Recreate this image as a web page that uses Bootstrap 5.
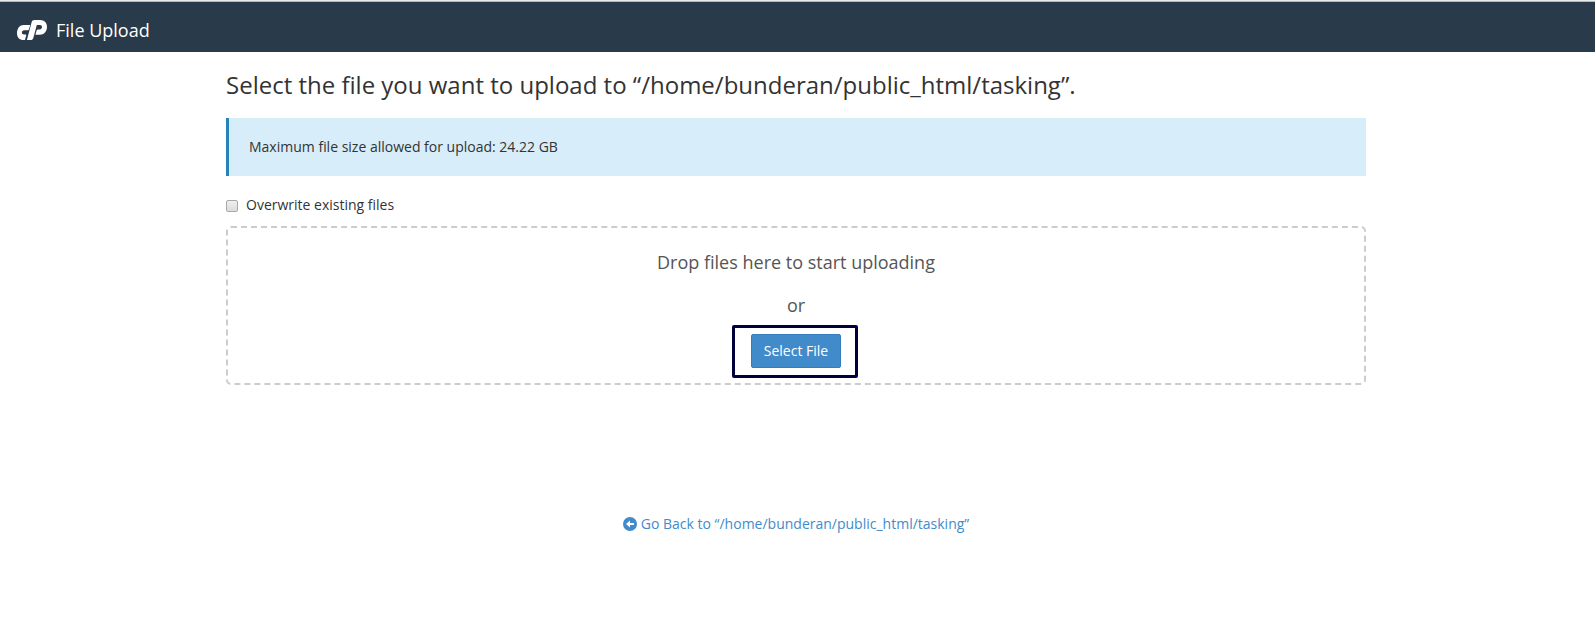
<!DOCTYPE html>
<html lang="en">
<head>
<meta charset="utf-8">
<meta name="viewport" content="width=device-width, initial-scale=1">
<title>File Upload</title>
<link href="https://cdn.jsdelivr.net/npm/bootstrap@5.3.0/dist/css/bootstrap.min.css" rel="stylesheet">
<style>
  body { font-family: "Open Sans", "Noto Sans", sans-serif; font-size: 14px; line-height: 20px; color: #333; background: #fff; }
  .topbar { height: 52px; background: #293a4a; border-top: 1px solid #ebebeb; box-shadow: inset 0 1px #b4b8bc; padding: 7px 17px 0; gap: 9px; font-size: 18px; line-height: 26px; }
  .page-body { padding-right: 3px; }
  .upload-wrap { max-width: 1170px; padding: 0 15px; }
  .page-title { font-size: 24px; line-height: 26px; margin: 20px 0; font-weight: 400; }
  .size-note { background: #d7edf9; border: 0; border-left: 3px solid #2784ba; border-radius: 0; padding: 19px 20px; margin-bottom: 19px; color: #333; }
  .overwrite { gap: 8px; padding-bottom: 11px; }
  .overwrite input { appearance: none; width: 12px; height: 12px; margin: 2px 0 0; border: 1px solid #a9a9a9; border-radius: 2px; background: linear-gradient(#eee, #dcdcdc); }
  .overwrite input:checked { background: #428bca; }
  .drop-zone { border: 2px dashed #ccc; border-radius: 5px; padding: 21px 15px 15px; color: #555; font-size: 18px; line-height: 26px; }
  .drop-zone p { margin-bottom: 17px; }
  .drop-zone p + p { margin-bottom: 16px; }
  .btn-select { --bs-btn-color: #fff; --bs-btn-bg: #428bca; --bs-btn-border-color: #357ebd; --bs-btn-hover-color: #fff; --bs-btn-hover-bg: #3276b1; --bs-btn-font-size: 14px; --bs-btn-line-height: 20px; --bs-btn-padding-x: 12px; --bs-btn-padding-y: 6px; --bs-btn-border-radius: 2px; display: block; }
  .callout-frame { inset: -9px -17px -10px -19px; border: 3px solid #00003f; border-radius: 2px; pointer-events: none; }
  .back-row { margin-top: 129px; }
  .back-link { color: #428bca; gap: 4px; }
  .back-link svg { margin-bottom: 1px; }
</style>
</head>
<body>
<header class="topbar d-flex align-items-center text-white">
  <svg width="30" height="20" viewBox="0 0 30 20" fill="#fff" aria-hidden="true">
    <path d="M6.700 5H13.200l-1.200 4.300c-.2.700-.7 1-1.300 1H7.200c-1.400 0-2.300.9-2.300 2.300 0 1.200.8 2 2.100 2h1.600c.5 0 .8.400.6.900L7.900 20H6.500C2.500 20 0 17.200 0 13.200 0 8.400 2.800 5 6.700 5Z"/>
    <path d="M9.900 20 14.600 2.300C15 .8 16 0 17.500 0h5.700C27.200 0 30 2.800 30 6.700c0 4.600-2.800 8-7.200 8h-4.400l1.200-4.300c.2-.7.700-1 1.300-1h1.500c1.600 0 2.600-.9 2.600-2.400 0-1.200-.9-1.900-2.200-1.900h-3l-3.500 12.800C15.900 19.300 15 20 13.600 20Z"/>
  </svg>
  <span>File Upload</span>
</header>

<main class="page-body">
  <div class="upload-wrap container-fluid mx-auto">
    <h1 class="page-title">Select the file you want to upload to “/home/bunderan/public_html/tasking”.</h1>
    <div class="size-note alert" role="status">Maximum file size allowed for upload: 24.22 GB</div>
    <div class="overwrite d-flex align-items-center">
      <input type="checkbox" id="overwrite">
      <label for="overwrite">Overwrite existing files</label>
    </div>
    <section class="drop-zone d-flex flex-column align-items-center text-center">
      <p>Drop files here to start uploading</p>
      <p>or</p>
      <div class="position-relative">
        <button type="button" class="btn btn-select">Select File</button>
        <div class="callout-frame position-absolute"></div>
      </div>
    </section>
    <div class="back-row d-flex justify-content-center">
      <a href="#" class="back-link d-inline-flex align-items-center text-decoration-none">
        <svg width="14" height="14" viewBox="0 0 14 14" aria-hidden="true">
          <circle cx="7" cy="7" r="7" fill="#428bca"/>
          <path d="M3 7 7 3.500V6h4v2H7v2.500Z" fill="#fff"/>
        </svg>
        <span>Go Back to “/home/bunderan/public_html/tasking”</span>
      </a>
    </div>
  </div>
</main>
<script src="https://cdn.jsdelivr.net/npm/bootstrap@5.3.0/dist/js/bootstrap.bundle.min.js"></script>
</body>
</html>
